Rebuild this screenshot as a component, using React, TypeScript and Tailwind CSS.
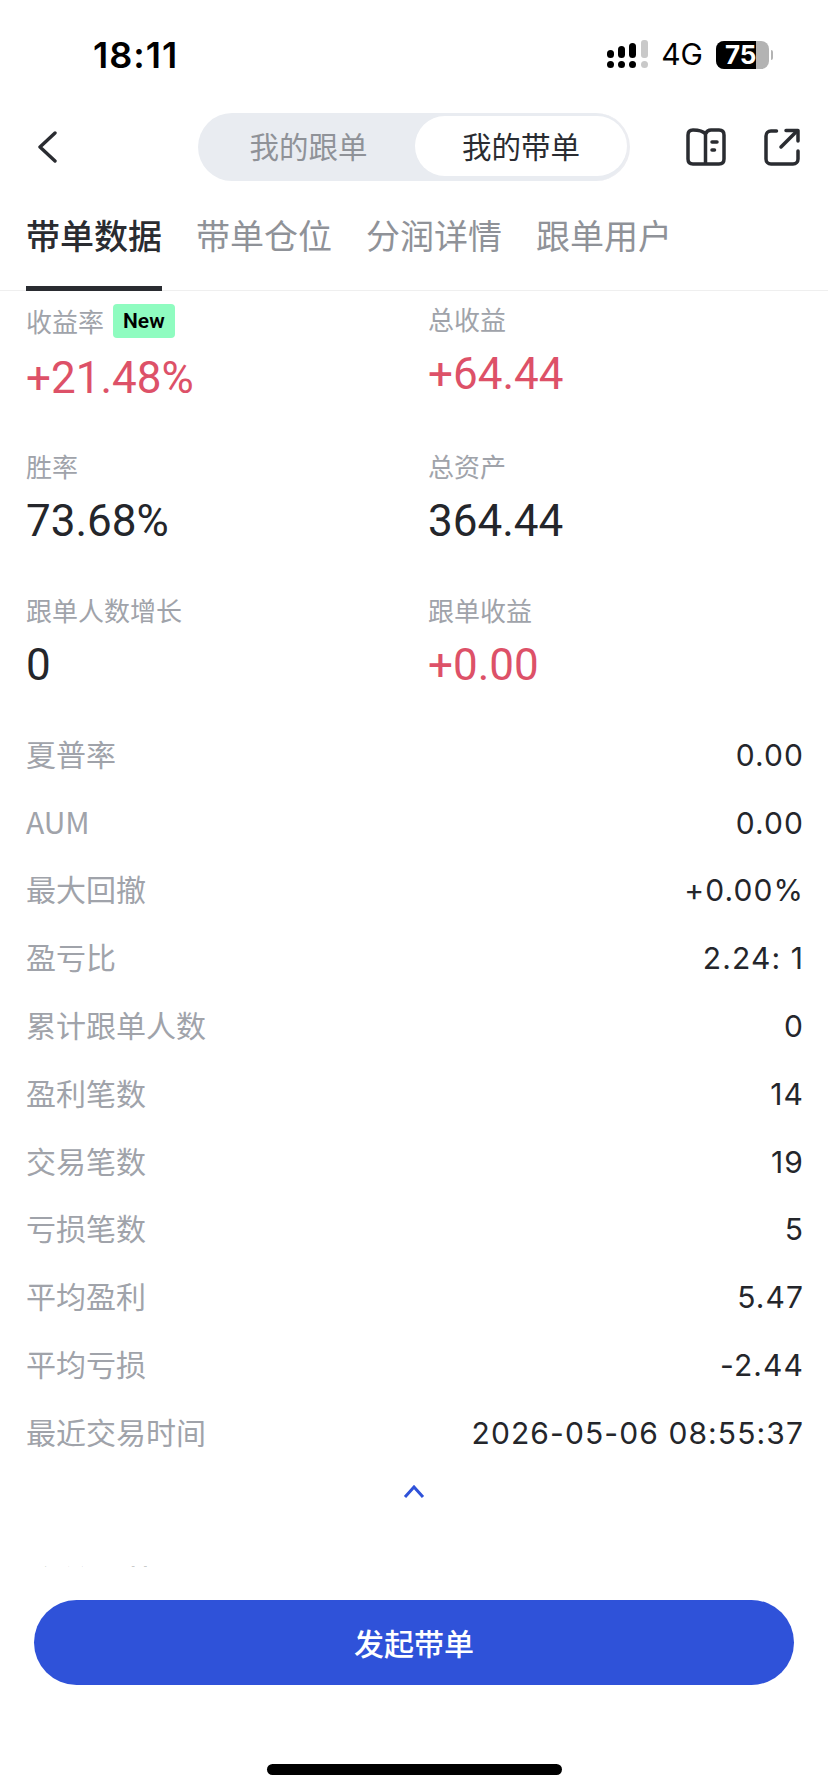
const rows: [string, string][] = [
  ["夏普率", "0.00"],
  ["AUM", "0.00"],
  ["最大回撤", "+0.00%"],
  ["盈亏比", "2.24: 1"],
  ["累计跟单人数", "0"],
  ["盈利笔数", "14"],
  ["交易笔数", "19"],
  ["亏损笔数", "5"],
  ["平均盈利", "5.47"],
  ["平均亏损", "-2.44"],
  ["最近交易时间", "2026-05-06 08:55:37"],
];

const stats = [
  { label: "收益率", value: "+21.48%", red: true, badge: true, h: "h-[147px]" },
  { label: "总收益", value: "+64.44", red: true, h: "h-[147px]" },
  { label: "胜率", value: "73.68%", h: "h-[144px]" },
  { label: "总资产", value: "364.44", h: "h-[144px]" },
  { label: "跟单人数增长", value: "0", h: "h-[127px]" },
  { label: "跟单收益", value: "+0.00", red: true, h: "h-[127px]" },
];

const tabs = ["带单数据", "带单仓位", "分润详情", "跟单用户"];

function SignalIcon() {
  return (
    <svg width="42" height="29" viewBox="0 0 42 29">
      <rect x="0" y="10" width="7" height="8" rx="3.5" fill="#000" />
      <rect x="11" y="6" width="7" height="12" rx="3.5" fill="#000" />
      <rect x="22" y="3" width="7" height="15" rx="3.5" fill="#000" />
      <rect x="34" y="0" width="7" height="18" rx="3" fill="#c9c9c9" />
      <rect x="0" y="21" width="7" height="7" rx="3.5" fill="#000" />
      <rect x="11" y="21" width="7" height="7" rx="3.5" fill="#000" />
      <rect x="22" y="21" width="7" height="7" rx="3.5" fill="#000" />
      <rect x="34" y="21" width="7" height="7" rx="3.5" fill="#c9c9c9" />
    </svg>
  );
}

function Battery() {
  return (
    <div className="flex items-center">
      <div className="relative flex h-[28px] w-[53px] overflow-hidden rounded-[8px] bg-[#b3b3b3]">
        <div className="h-full w-[40px] bg-black" />
        <span className="absolute left-[9px] top-0 text-[26px] font-bold leading-[28px] text-white">75</span>
      </div>
      <div className="ml-[2px] h-[10px] w-[2px] rounded-r-full bg-[#b3b3b3]" />
    </div>
  );
}

function BookIcon() {
  return (
    <svg width="40" height="38" viewBox="0 0 40 38" fill="none" stroke="#2a2c31" strokeWidth="3.5" strokeLinejoin="round" strokeLinecap="round">
      <path d="M19.5 6 C17 3 13 2 7 2 C3.500 2 2 3.500 2 7 V31 C2 34.500 3.500 36 7 36 H33 C36.500 36 38 34.500 38 31 V7 C38 3.500 36.500 2 33 2 H25 C22.500 2 20.500 3.500 19.500 6 V36" />
      <path d="M26 14 H31" />
      <path d="M26 22 H28.500" />
    </svg>
  );
}

function ShareIcon() {
  return (
    <svg width="37" height="38" viewBox="0 0 37 38" fill="none" stroke="#2a2c31" strokeWidth="3.500" strokeLinecap="round" strokeLinejoin="round">
      <path d="M12.500 3 H7 C4 3 2 5 2 8 V31 C2 34 4 36 7 36 H29 C32 36 34 34 34 31 V23" />
      <path d="M17 19 L33 3" />
      <path d="M22 2.500 H34 V13" />
    </svg>
  );
}

export default function App() {
  return (
    <div
      className="flex h-[1792px] w-[828px] flex-col overflow-hidden bg-white"
      style={{ fontFamily: '"Noto Sans CJK SC", sans-serif' }}
    >
      {/* status bar */}
      <div className="flex h-[113px] shrink-0 items-start justify-between pl-[93px] pr-[55px] pt-[40px] [font-family:Inter,sans-serif]">
        <span className="text-[36px] font-semibold leading-[30px] tracking-[1px] text-black">18:11</span>
        <div className="flex items-center">
          <SignalIcon />
          <span className="ml-[12px] mr-[13px] text-[30px] font-normal leading-[29px] text-black">4G</span>
          <Battery />
        </div>
      </div>

      {/* nav */}
      <div className="flex h-[68px] shrink-0 items-center pl-[36px] pr-[27px]">
        <svg width="22" height="32" viewBox="0 0 22 32" fill="none" stroke="#2a2c31" strokeWidth="3.400" strokeLinecap="round" strokeLinejoin="round">
          <path d="M19 2 L4 16 L19 30" />
        </svg>
        <div className="ml-[140px] flex h-[68px] w-[432px] items-center rounded-full border-r-[3px] border-[#ecedf1] bg-[#e9ecf1] pb-[4px] pt-[2px]">
          <div className="flex-1 pb-[2px] pl-[4px] text-center text-[29.500px] leading-[40px] text-[#8f9298]">我的跟单</div>
          <div className="flex h-[60px] w-[212px] items-center justify-center rounded-full bg-white pb-[2px] text-[29.500px] text-[#2a2c31]">
            我的带单
          </div>
        </div>
        <div className="ml-auto flex items-center gap-[38px]">
          <BookIcon />
          <ShareIcon />
        </div>
      </div>

      {/* tabs */}
      <div className="flex h-[110px] shrink-0 items-start gap-[34px] border-b border-[#efefef] pl-[26px] pt-[31px]">
        {tabs.map((t, i) => (
          <div key={t} className="relative">
            <span className={`block text-[34px] leading-[46px] ${i === 0 ? "font-medium text-[#2a2c31]" : "text-[#8f9298]"}`}>
              {t}
            </span>
            {i === 0 && <div className="absolute left-0 right-0 top-[74px] h-[5px] bg-[#2a2c31]" />}
          </div>
        ))}
      </div>

      {/* scrolling content */}
      <div className="min-h-0 flex-1 overflow-hidden px-[26px]">
        <div className="grid grid-cols-[402px_1fr] pt-[11px]">
          {stats.map((s) => (
            <div key={s.label} className={s.h}>
              <div className={`flex h-[34px] items-center ${s.badge ? "mt-[2px]" : ""}`}>
                <span className="text-[26px] leading-[34px] text-[#a0a3aa]">{s.label}</span>
                {s.badge && (
                  <span className="ml-[9px] rounded-[4px] bg-[#8ffcc0] px-[10px] text-[21px] font-semibold leading-[34px] text-black [font-family:Roboto,sans-serif]">
                    New
                  </span>
                )}
              </div>
              <div
                className={`text-[44px] font-[450] leading-[50px] [font-family:Roboto,sans-serif] ${
                  s.badge ? "mt-[15px]" : "mt-[13px]"
                } ${s.red ? "text-[#dd5168]" : "text-[#24262b]"}`}
              >
                {s.value}
              </div>
            </div>
          ))}
        </div>

        <div>
          {rows.map(([label, value]) => (
            <div key={label} className="flex h-[67.800px] items-center justify-between">
              <span className="pb-[2px] text-[30px] leading-[40px] text-[#a0a3aa]">{label}</span>
              <span className="-mr-[2px] pt-[2px] text-[30px] leading-[40px] tracking-[1.100px] text-[#24262b] [font-family:Inter,sans-serif]">
                {value}
              </span>
            </div>
          ))}
        </div>

        <div className="flex justify-center pt-[19px]">
          <svg width="22" height="13" viewBox="0 0 22 13" fill="none" stroke="#2f52d9" strokeWidth="3">
            <path d="M2 12 L11 2 L20 12" />
          </svg>
        </div>

        <div className="mt-[60px] text-[33px] font-medium leading-[46px] text-[#2a2c31]">收益走势</div>
      </div>

      {/* footer */}
      <div className="flex h-[225px] shrink-0 flex-col items-center bg-white pt-[33px]">
        <button className="h-[85px] w-[760px] rounded-full bg-[#2f52d9] text-[30px] font-medium text-white">发起带单</button>
        <div className="mt-[79px] h-[11px] w-[295px] rounded-full bg-black" />
      </div>
    </div>
  );
}
